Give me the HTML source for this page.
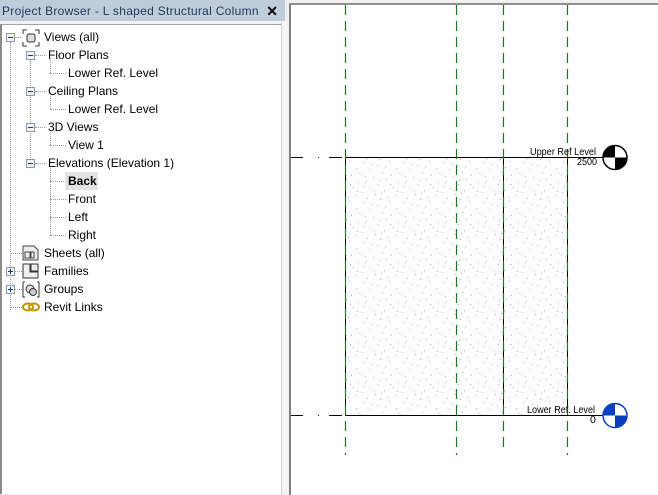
<!DOCTYPE html>
<html><head><meta charset="utf-8"><style>
body{margin:0;width:658px;height:493px;overflow:hidden;background:#f0f0f0;position:relative;font-family:"Liberation Sans",sans-serif;font-size:12px}
.title{position:absolute;left:0;top:0;width:285px;height:21px;background:#bfcddb;color:#1e395b;font-size:12px;line-height:22px}
.title span{position:absolute;left:2px;top:0;letter-spacing:0.3px}
.title b{position:absolute;right:7px;top:0;font-size:14px;color:#000}
.tree{position:absolute;left:0;top:24px;width:279px;height:469px;background:#fff;border-left:2px solid #8a8a8a;border-top:1px solid #a0a0a0;border-right:1px solid #c8c8c8}
.canvas{position:absolute;left:289px;top:3px;width:369px;height:490px;background:#fff;border-left:2px solid #808080;border-top:2px solid #909090}
.t{position:absolute;white-space:nowrap;color:#000;font-size:12px;line-height:14px}
.dv{position:absolute;border-left:1px dotted #999;width:0}
.dh{position:absolute;border-top:1px dotted #999;height:0}
.bx{position:absolute;width:7px;height:7px;border:1px solid #8c9ab0;background:#f4f4f4}
.bx:after{content:"";position:absolute;left:1px;top:3px;width:5px;height:1px;background:#1a3c8c}
.bx.p:before{content:"";position:absolute;left:3px;top:1px;width:1px;height:5px;background:#1a3c8c}
</style></head><body>
<div class="title"><span>Project Browser - L shaped Structural Column</span><b>✕</b></div>
<div class="tree"></div>
<div class="dv" style="left:10px;top:42px;height:268px"></div>
<div class="dv" style="left:30px;top:60px;height:104px"></div>
<div class="dv" style="left:50px;top:60px;height:13px"></div>
<div class="dv" style="left:50px;top:96px;height:13px"></div>
<div class="dv" style="left:50px;top:132px;height:13px"></div>
<div class="dv" style="left:50px;top:168px;height:67px"></div>
<div class="dh" style="left:15px;top:37px;width:6px"></div>
<div class="dh" style="left:35px;top:55px;width:10px"></div>
<div class="dh" style="left:35px;top:91px;width:10px"></div>
<div class="dh" style="left:35px;top:127px;width:10px"></div>
<div class="dh" style="left:35px;top:163px;width:10px"></div>
<div class="dh" style="left:50px;top:73px;width:16px"></div>
<div class="dh" style="left:50px;top:109px;width:16px"></div>
<div class="dh" style="left:50px;top:145px;width:16px"></div>
<div class="dh" style="left:50px;top:181px;width:14px"></div>
<div class="dh" style="left:50px;top:199px;width:16px"></div>
<div class="dh" style="left:50px;top:217px;width:16px"></div>
<div class="dh" style="left:50px;top:235px;width:16px"></div>
<div class="dh" style="left:10px;top:253px;width:12px"></div>
<div class="dh" style="left:15px;top:271px;width:7px"></div>
<div class="dh" style="left:15px;top:289px;width:7px"></div>
<div class="dh" style="left:10px;top:307px;width:12px"></div>
<div class="bx" style="left:6px;top:33px"></div>
<div class="bx" style="left:26px;top:51px"></div>
<div class="bx" style="left:26px;top:87px"></div>
<div class="bx" style="left:26px;top:123px"></div>
<div class="bx" style="left:26px;top:159px"></div>
<div class="bx p" style="left:6px;top:267px"></div>
<div class="bx p" style="left:6px;top:285px"></div>
<svg style="position:absolute;left:22px;top:29px" width="18" height="18"><path d="M1 5V1h4M13 1h4v4M17 13v4h-4M5 17H1v-4" stroke="#333" fill="none"/><rect x="5" y="5" width="8" height="8" rx="2" fill="#ddd" stroke="#333"/></svg>
<svg style="position:absolute;left:22px;top:245px" width="18" height="16"><path d="M1 1h11l4 4v10H1z" fill="#eee" stroke="#444"/><rect x="3" y="7" width="5" height="6" fill="none" stroke="#444"/><rect x="9" y="7" width="3" height="6" fill="none" stroke="#444"/></svg>
<svg style="position:absolute;left:22px;top:263px" width="18" height="16"><path d="M1 1h7v8h8v6H1z" fill="#eee" stroke="#333"/><path d="M9 1h7v7H9z" fill="#eee" stroke="#333"/></svg>
<svg style="position:absolute;left:22px;top:281px" width="18" height="17"><path d="M3 1H1v15h2M15 1h2v15h-2" stroke="#333" fill="none"/><circle cx="8" cy="8" r="4" fill="#ddd" stroke="#333"/><circle cx="11" cy="11" r="3.5" fill="#ccc" stroke="#333"/></svg>
<svg style="position:absolute;left:22px;top:302px" width="18" height="10"><ellipse cx="6" cy="5" rx="5" ry="3.5" fill="none" stroke="#c89400" stroke-width="2"/><ellipse cx="12" cy="5" rx="5" ry="3.5" fill="none" stroke="#c89400" stroke-width="2"/></svg>
<div class="t" style="left:44px;top:30px">Views (all)</div>
<div class="t" style="left:48px;top:48px">Floor Plans</div>
<div class="t" style="left:68px;top:66px">Lower Ref. Level</div>
<div class="t" style="left:48px;top:84px">Ceiling Plans</div>
<div class="t" style="left:68px;top:102px">Lower Ref. Level</div>
<div class="t" style="left:48px;top:120px">3D Views</div>
<div class="t" style="left:68px;top:138px">View 1</div>
<div class="t" style="left:48px;top:156px">Elevations (Elevation 1)</div>
<div style="position:absolute;left:65px;top:172px;width:33px;height:18px;background:#e3e3e3"></div>
<div class="t" style="left:68px;top:174px;font-weight:bold">Back</div>
<div class="t" style="left:68px;top:192px">Front</div>
<div class="t" style="left:68px;top:210px">Left</div>
<div class="t" style="left:68px;top:228px">Right</div>
<div class="t" style="left:44px;top:246px">Sheets (all)</div>
<div class="t" style="left:44px;top:264px">Families</div>
<div class="t" style="left:44px;top:282px">Groups</div>
<div class="t" style="left:44px;top:300px">Revit Links</div>
<div style="position:absolute;left:281px;top:22px;width:8px;height:471px;background:#f4f4f4;border-left:1px solid #d8d8d8"></div>
<div class="canvas"></div>
<svg style="position:absolute;left:0;top:0" width="658" height="493">
<defs><pattern id="st" width="40" height="40" patternUnits="userSpaceOnUse">
<g fill="#aaa">
<rect x="3" y="2" width="1" height="1"/><rect x="17" y="5" width="1" height="1"/><rect x="29" y="1" width="1" height="1"/><rect x="36" y="8" width="1" height="1"/><rect x="9" y="9" width="1" height="1"/><rect x="22" y="12" width="1" height="1"/><rect x="1" y="14" width="1" height="1"/><rect x="31" y="15" width="1" height="1"/><rect x="13" y="17" width="1" height="1"/><rect x="26" y="19" width="1" height="1"/><rect x="6" y="21" width="1" height="1"/><rect x="38" y="22" width="1" height="1"/><rect x="18" y="24" width="1" height="1"/><rect x="33" y="27" width="1" height="1"/><rect x="10" y="28" width="1" height="1"/><rect x="24" y="30" width="1" height="1"/><rect x="2" y="32" width="1" height="1"/><rect x="15" y="34" width="1" height="1"/><rect x="35" y="35" width="1" height="1"/><rect x="28" y="37" width="1" height="1"/><rect x="7" y="38" width="1" height="1"/><rect x="20" y="39" width="1" height="1"/><rect x="12" y="4" width="1" height="1"/><rect x="25" y="7" width="1" height="1"/><rect x="38" y="13" width="1" height="1"/><rect x="5" y="16" width="1" height="1"/><rect x="19" y="20" width="1" height="1"/><rect x="30" y="24" width="1" height="1"/><rect x="4" y="26" width="1" height="1"/><rect x="14" y="30" width="1" height="1"/><rect x="37" y="31" width="1" height="1"/><rect x="21" y="33" width="1" height="1"/>
</g></pattern></defs>
<rect x="345" y="157" width="222" height="258" fill="url(#st)"/>
<rect x="345.5" y="157.5" width="222" height="258" fill="none" stroke="#000"/>
<line x1="503.5" y1="157" x2="503.5" y2="415" stroke="#000"/>
<g stroke="#1a7a1a" stroke-width="1.2" stroke-dasharray="10,6">
<line x1="345.5" y1="5" x2="345.5" y2="455"/><line x1="456.5" y1="5" x2="456.5" y2="455"/><line x1="503.5" y1="5" x2="503.5" y2="447"/><line x1="567.5" y1="5" x2="567.5" y2="455"/></g>
<g stroke="#000"><path d="M291 157.5h12M318 157.5h1M329 157.5h13M291 415.5h12M318 415.5h1M329 415.5h13"/>
<line x1="567" y1="157.5" x2="603" y2="157.5"/><line x1="567" y1="415.5" x2="603" y2="415.5"/></g>
<circle cx="615" cy="157.5" r="12" fill="#fff" stroke="#000" stroke-width="1.5"/>
<path d="M615 157.5V145.5A12 12 0 0 0 603 157.5zM615 157.5V169.5A12 12 0 0 0 627 157.5z" fill="#000"/>
<circle cx="615" cy="415.5" r="12" fill="#fff" stroke="#0a3fc0" stroke-width="1.5"/>
<path d="M615 415.5V403.5A12 12 0 0 0 603 415.5zM615 415.5V427.5A12 12 0 0 0 627 415.5z" fill="#0a3fc0"/>
<g font-family="Liberation Sans,sans-serif" font-size="10.5" fill="#000">
<text x="530" y="155" textLength="66" lengthAdjust="spacingAndGlyphs">Upper Ref Level</text><text x="577" y="165" textLength="20" lengthAdjust="spacingAndGlyphs">2500</text>
<text x="527" y="413" textLength="68" lengthAdjust="spacingAndGlyphs">Lower Ref. Level</text><text x="590" y="423">0</text></g>
</svg>
</body></html>
